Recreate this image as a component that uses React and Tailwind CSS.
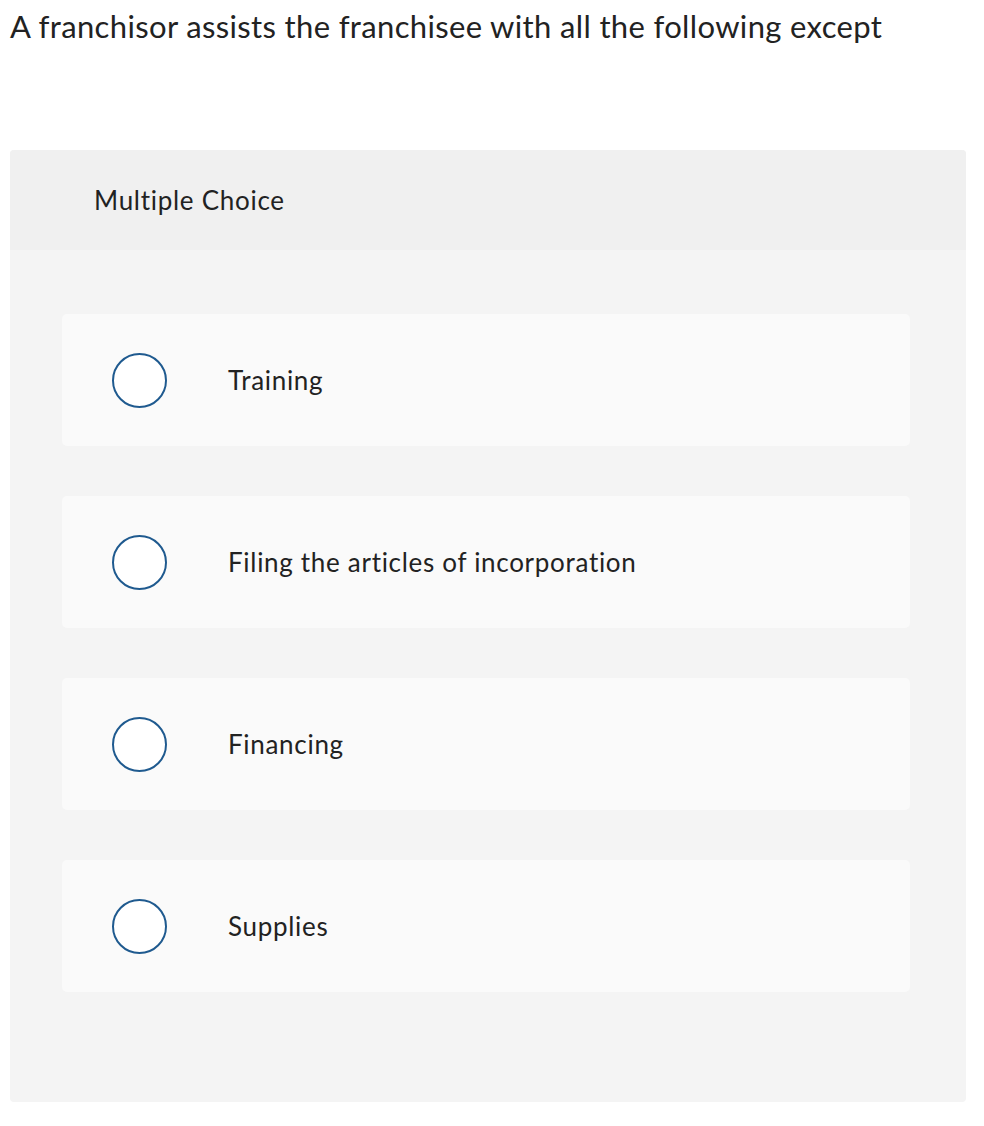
import React from 'react';

const options = ['Training', 'Filing the articles of incorporation', 'Financing', 'Supplies'];

const App = () => {
  return (
    <div className="min-h-[1126px] bg-white text-[#222] font-['Lato','Open_Sans',sans-serif]">
      <h1 className="pl-[10px] pt-[6px] text-[31px] leading-[40px] tracking-[0.35px]">
        A franchisor assists the franchisee with all the following except
      </h1>

      <div className="mx-[10px] mt-[104px] w-[956px] rounded-[4px] overflow-hidden bg-[#f4f4f4]">
        {/* header */}
        <div className="h-[100px] bg-[#f0f0f0] flex items-center pl-[84px]">
          <span className="text-[26px] tracking-[0.72px]">Multiple Choice</span>
        </div>

        {/* answers */}
        <div className="pt-[64px] pb-[110px] pl-[52px] pr-[56px] flex flex-col gap-[50px]">
          {options.map((opt) => (
            <div key={opt} className="h-[132px] rounded-[5px] bg-[#fafafa] flex items-center pl-[50px]">
              <span className="w-[55px] h-[55px] rounded-full border-2 border-[#1f5a8f] bg-white shrink-0" />
              <span className="ml-[61px] text-[26px] tracking-[0.7px]">{opt}</span>
            </div>
          ))}
        </div>
      </div>
    </div>
  );
};

export default App;
